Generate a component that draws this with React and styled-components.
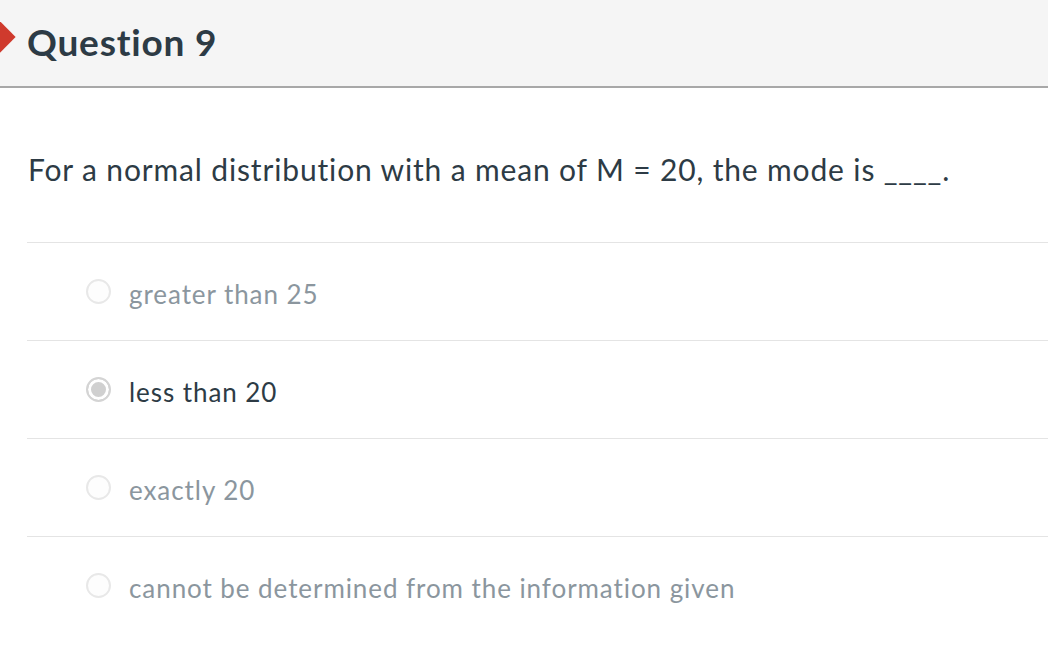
import React from 'react'
import styled, { createGlobalStyle } from 'styled-components'

const GlobalStyle = createGlobalStyle`
  html, body {
    margin: 0;
    padding: 0;
    background: #fff;
    font-family: Lato, "Open Sans", "Liberation Sans", sans-serif;
    color: #2d3b45;
  }
`

const answers = [
  { text: 'greater than 25', selected: false },
  { text: 'less than 20', selected: true },
  { text: 'exactly 20', selected: false },
  { text: 'cannot be determined from the information given', selected: false },
]

const Page = () => {
  return (
    <Wrapper>
      <GlobalStyle />
      <Header>
        <Marker />
        <Title>Question 9</Title>
      </Header>
      <Body>
        <QuestionText>
          For a normal distribution with a mean of M = 20, the mode is ____.
        </QuestionText>
        <AnswerList>
          {answers.map((a) => (
            <Answer key={a.text}>
              <Radio $selected={a.selected} />
              <AnswerText $selected={a.selected}>{a.text}</AnswerText>
            </Answer>
          ))}
        </AnswerList>
      </Body>
    </Wrapper>
  )
}

const Wrapper = styled.div`
  width: 1048px;
  height: 660px;
  overflow: hidden;
`

const Header = styled.header`
  position: relative;
  height: 86px;
  background: #f5f5f5;
  border-bottom: 2px solid #a8a8a8;
  display: flex;
  align-items: center;
  padding-left: 27px;
  box-sizing: content-box;
`

const Marker = styled.span`
  position: absolute;
  left: -23px;
  top: 21px;
  width: 32px;
  height: 32px;
  background: #cf3a2d;
  transform: rotate(45deg);
`

const Title = styled.h2`
  margin: 0;
  font-size: 37px;
  font-weight: 700;
  color: #2d3b45;
  letter-spacing: 0.8px;
  line-height: 1;
  padding-bottom: 4px;
`

const Body = styled.div`
  padding-left: 27px;
`

const QuestionText = styled.p`
  margin: 0;
  padding: 58px 0 50px 1px;
  font-size: 30px;
  line-height: 46px;
  letter-spacing: 0.85px;
  color: #2d3b45;
`

const AnswerList = styled.ul`
  list-style: none;
  margin: 0;
  padding: 0;
`

const Answer = styled.li`
  display: flex;
  align-items: center;
  height: 97px;
  border-top: 1px solid #e4e4e4;
  padding-left: 59px;
`

const Radio = styled.span`
  width: 25px;
  height: 25px;
  box-sizing: border-box;
  border-radius: 50%;
  border: 2px solid ${(p) => (p.$selected ? '#d4d4d4' : '#e8e8e8')};
  background: ${(p) => (p.$selected ? '#d0d0d0' : '#fdfdfd')};
  box-shadow: ${(p) => (p.$selected ? 'inset 0 0 0 3px #fff' : 'none')};
  margin-right: 18px;
  flex-shrink: 0;
`

const AnswerText = styled.span`
  font-size: 26px;
  letter-spacing: 0.93px;
  color: ${(p) => (p.$selected ? '#2d3b45' : '#8b969e')};
  padding-top: 4px;
`

export default Page
